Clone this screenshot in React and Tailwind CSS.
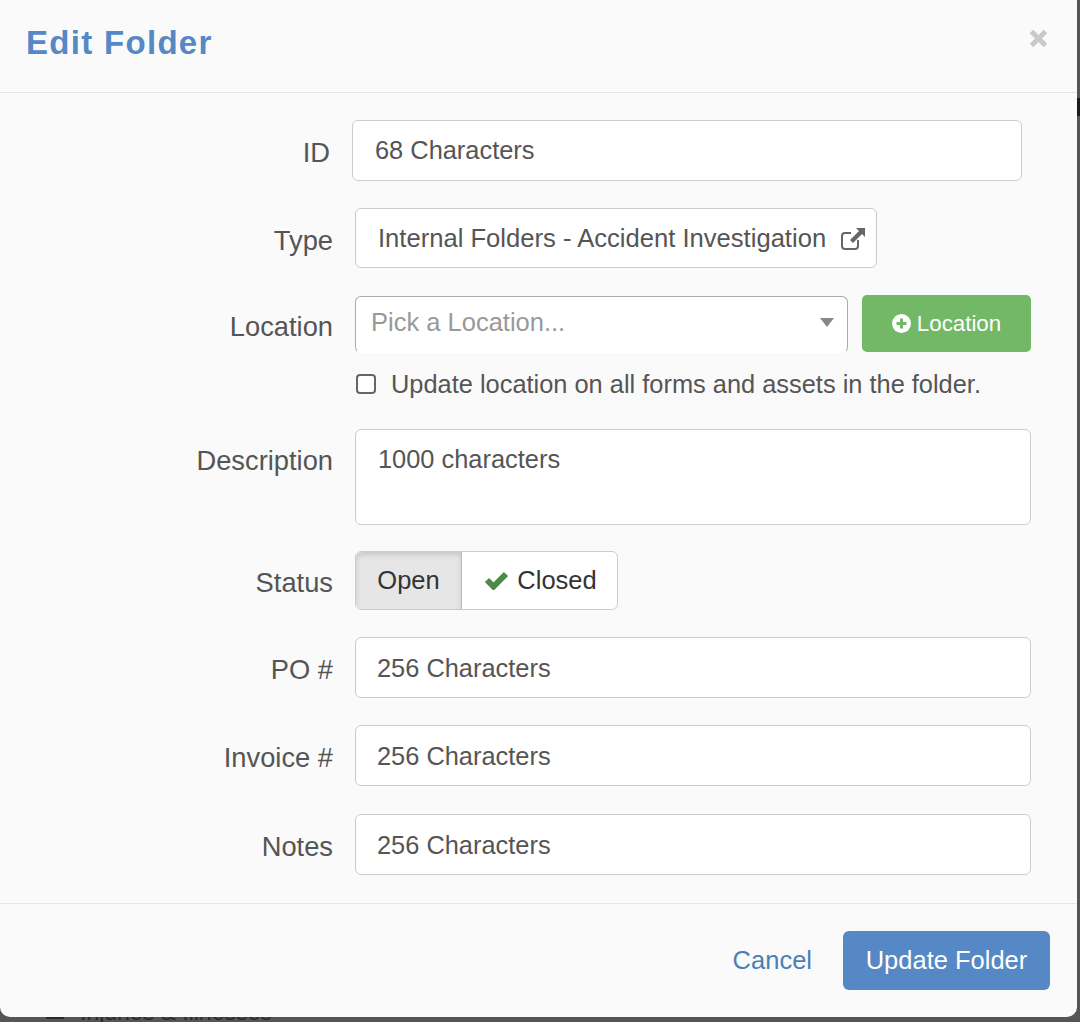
const font = "font-['Liberation_Sans',Arial,sans-serif]";

const TextField = ({ value }) => (
  <div className="flex h-[61px] flex-1 items-center rounded-[6px] border border-[#ccc] bg-white px-[21px] pt-[1px] text-[25.4px] text-[#555]">
    {value}
  </div>
);

const Row = ({ label, className = "", children }) => (
  <div className={"flex items-center gap-[22px] " + className}>
    <div className="w-[333px] shrink-0 pt-[6px] text-right text-[27.3px] text-[#555]">{label}</div>
    {children}
  </div>
);

const App = () => {
  return (
    <div className={"relative h-[1022px] w-[1080px] overflow-hidden bg-[#555] " + font}>
      <div className="absolute bottom-[-7px] left-[80px] text-[23px] text-[#2b2b2b]">Injuries &amp; Illnesses</div>
      <div className="absolute left-[46px] top-[1017px] h-[2px] w-[18px] bg-[#2b2b2b]"></div>
      <div className="absolute right-0 top-[98px] h-[18px] w-[3px] bg-[#1c1c1c]"></div>
      <div className="relative flex h-[1017px] w-[1077px] flex-col rounded-b-[10px] bg-[#fafafa]">
        <div className="flex h-[93px] shrink-0 items-start justify-between border-b border-[#e5e5e5] pl-[26px] pr-[29px]">
          <h4 className="mt-[24px] text-[33px] font-bold leading-[38px] tracking-[1.3px] text-[#5588c5]">Edit Folder</h4>
          <svg className="mt-[29px]" width="19" height="19" viewBox="0 0 19 19" aria-hidden="true">
            <path d="M2.5 2.5 16.5 16.5M16.5 2.5 2.5 16.5" stroke="#c9c9c9" strokeWidth="5" />
          </svg>
        </div>

        <div className="flex flex-1 flex-col pr-[46px]">
          <div className="mt-[27px] flex items-center gap-[22px]">
            <div className="w-[330px] shrink-0 pt-[5px] text-right text-[27.3px] text-[#555]">ID</div>
            <div className="mr-[9px] flex h-[61px] flex-1 items-center rounded-[6px] border border-[#ccc] bg-white px-[22px] text-[25.4px] text-[#555]">
              68 Characters
            </div>
          </div>

          <Row label="Type" className="mt-[27px]">
            <div className="flex h-[60px] w-[522px] items-center justify-between rounded-[6px] border border-[#ccc] bg-white pl-[22px] pr-[10px] pt-[1px] text-[25.6px] text-[#555]">
              Internal Folders - Accident Investigation
              <svg width="26" height="24" viewBox="0 0 26 24" aria-hidden="true">
                <path d="M18 13v6a3 3 0 0 1-3 3H5a3 3 0 0 1-3-3V9a3 3 0 0 1 3-3h6" fill="none" stroke="#666" strokeWidth="2" />
                <path d="M16 1h9v9l-3-3-9 9-3-3 9-9z" fill="#666" />
              </svg>
            </div>
          </Row>

          <Row label="Location" className="mt-[28px]">
            <div className="flex h-[57px] w-[493px] items-center justify-between rounded-[6px] border border-[#aaa] border-b-transparent bg-white pb-[4px] pl-[15px] pr-[13px] text-[25.5px] text-[#999]">
              Pick a Location...
              <div className="h-0 w-0 border-x-[7px] border-t-[9px] border-x-transparent border-t-[#888]"></div>
            </div>
            <button className="ml-[-8px] mt-[-2px] flex h-[57px] w-[169px] items-center justify-center gap-[6px] rounded-[5px] bg-[#72b866] text-[22.3px] text-white">
              <svg width="19" height="19" viewBox="0 0 19 19" aria-hidden="true">
                <circle cx="9.5" cy="9.5" r="9.5" fill="#fff" />
                <path d="M9.5 4.5v10M4.5 9.5h10" stroke="#72b866" strokeWidth="3" />
              </svg>
              Location
            </button>
          </Row>

          <label className="ml-[356px] mt-[4px] flex h-[54px] items-center gap-[15px] text-[25.4px] text-[#555]">
            <span className="h-[20px] w-[20px] rounded-[4px] border-2 border-[#666] bg-white"></span>
            Update location on all forms and assets in the folder.
          </label>

          <div className="mt-[18px] flex items-start gap-[22px]">
            <div className="w-[333px] shrink-0 pt-[12px] text-right text-[27.3px] text-[#555]">Description</div>
            <div className="h-[96px] flex-1 rounded-[6px] border border-[#ccc] bg-white px-[22px] pt-[14px] text-[25.4px] leading-[30px] text-[#555]">
              1000 characters
            </div>
          </div>

          <Row label="Status" className="mt-[26px]">
            <div className="flex h-[59px] w-[263px] rounded-[6px] border border-[#ccc] bg-white text-[25.5px] text-[#333]">
              <div className="flex w-[106px] items-center justify-center rounded-l-[6px] border-r border-[#bbb] bg-[#e6e6e6] shadow-[inset_0_3px_5px_rgba(0,0,0,0.125)]">
                Open
              </div>
              <div className="flex flex-1 items-center justify-center gap-[8px] pl-[2px]">
                <svg width="25" height="19" viewBox="0 0 25 19" aria-hidden="true">
                  <path d="M3 9 9.5 15.5 22 3" fill="none" stroke="#4b8b45" strokeWidth="6" />
                </svg>
                Closed
              </div>
            </div>
          </Row>

          <Row label="PO #" className="mt-[27px]">
            <TextField value="256 Characters" />
          </Row>
          <Row label="Invoice #" className="mt-[27px]">
            <TextField value="256 Characters" />
          </Row>
          <Row label="Notes" className="mt-[28px]">
            <TextField value="256 Characters" />
          </Row>
        </div>

        <div className="flex h-[114px] shrink-0 items-center justify-end gap-[31px] border-t border-[#e5e5e5] pr-[27px] text-[25.5px]">
          <span className="text-[#4a7fb8]">Cancel</span>
          <button className="h-[59px] w-[207px] rounded-[6px] bg-[#5588c5] text-white">Update Folder</button>
        </div>
      </div>
    </div>
  );
};

export default App;
